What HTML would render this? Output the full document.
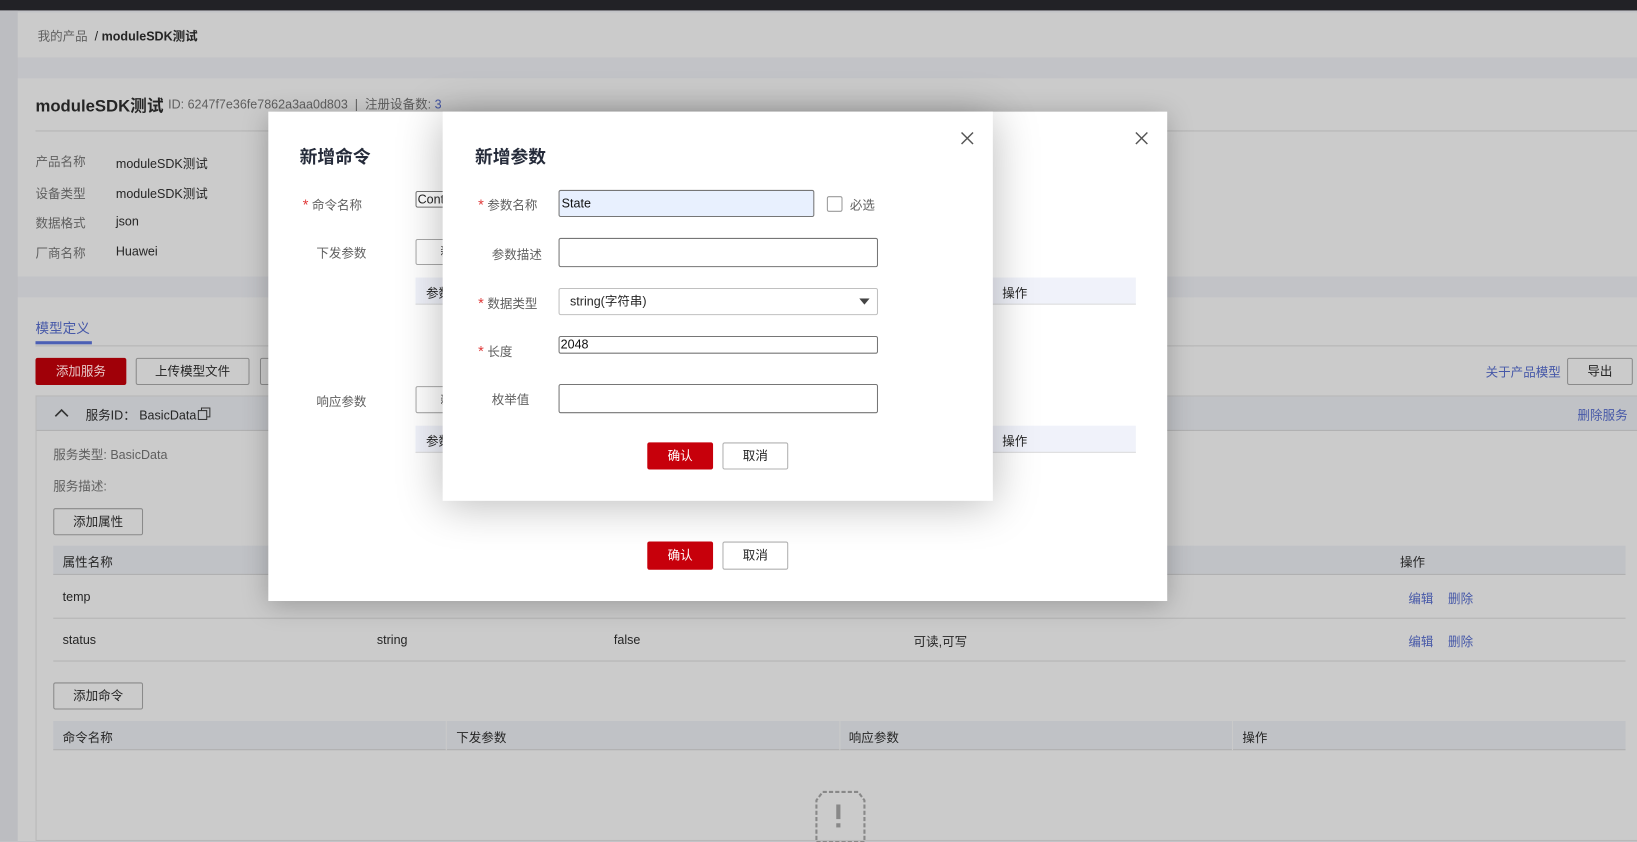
<!DOCTYPE html>
<html><head><meta charset="utf-8"><style>
*{margin:0;padding:0;box-sizing:border-box}
html,body{width:1637px;height:841px;overflow:hidden;background:#c2c3c7}
body{font-family:"Liberation Sans","Noto Sans CJK SC",sans-serif;font-size:12px;color:#252525}
#w{position:absolute;left:0;top:0;width:1568px;height:806px;transform:scale(1.04401,1.04342);transform-origin:0 0}
.a{position:absolute;white-space:nowrap}
.card{position:absolute;background:#cbcbcb}
.btn{position:absolute;border:1px solid #8a8a8a;border-radius:2px;text-align:center;font-size:12px;color:#252525;background:transparent}
.lnk{color:#4658a8}
.g{color:#5f5f5f}
.dlg{position:absolute;background:#fff;box-shadow:0 4px 24px rgba(0,0,0,.25)}
.star{color:#e03a3a;font-size:14px}
.inp{position:absolute;border:1px solid #767676;border-radius:2px;background:#fff}
.ok{position:absolute;background:#c7000b;color:#fff;text-align:center;font-size:12px;border-radius:2px;line-height:27px}
.cc{position:absolute;border:1px solid #b0b0b0;background:#fff;text-align:center;line-height:25px;border-radius:2px}
</style></head><body><div id="w">
<div class="a" style="left:0;top:0;width:1568px;height:10px;background:#222226"></div>
<div class="a" style="left:0;top:10px;width:17px;height:796px;background:#bcbdc1"></div>
<div class="card" style="left:17px;top:12px;width:1551px;height:43px"></div>
<div class="a g" style="left:36px;top:26px">我的产品 <span style="color:#252525">&nbsp;/ <b>moduleSDK测试</b></span></div>
<div class="card" style="left:17px;top:75px;width:1551px;height:190px"></div>
<div class="a" style="left:34px;top:88px;font-size:16px;font-weight:bold">moduleSDK测试</div>
<div class="a g" style="left:161px;top:91px">ID: 6247f7e36fe7862a3aa0d803 &nbsp;| &nbsp;注册设备数: <span class="lnk">3</span></div>
<div class="a" style="left:34px;top:125px;width:1534px;height:1px;background:#b4b4b4"></div>
<div class="a g" style="left:34px;top:148px;line-height:14px">产品名称</div><div class="a" style="left:111px;top:148px">moduleSDK测试</div>
<div class="a g" style="left:34px;top:177px">设备类型</div><div class="a" style="left:111px;top:177px">moduleSDK测试</div>
<div class="a g" style="left:34px;top:205px">数据格式</div><div class="a" style="left:111px;top:205px">json</div>
<div class="a g" style="left:34px;top:234px">厂商名称</div><div class="a" style="left:111px;top:234px">Huawei</div>
<div class="card" style="left:17px;top:285px;width:1551px;height:521px"></div>
<div class="a lnk" style="left:34px;top:304px;font-size:13px">模型定义</div>
<div class="a" style="left:34px;top:327px;width:54px;height:3px;background:#4b5fb5"></div>
<div class="a" style="left:34px;top:331px;width:1534px;height:1px;background:#b4b4b4"></div>
<div class="a" style="left:34px;top:343px;width:87px;height:26px;background:#a00008;border-radius:2px;color:#e8c8c8;text-align:center;line-height:26px">添加服务</div>
<div class="btn" style="left:130px;top:343px;width:109px;height:26px;line-height:24px">上传模型文件</div>
<div class="btn" style="left:249px;top:343px;width:30px;height:26px"></div>
<div class="a lnk" style="left:1423px;top:348px">关于产品模型</div>
<div class="btn" style="left:1501px;top:343px;width:63px;height:26px;line-height:24px">导出</div>
<div class="a" style="left:34px;top:379px;width:1534px;height:427px;border:1px solid #b8b8b8;border-right:none"></div>
<div class="a" style="left:35px;top:380px;width:1533px;height:33px;background:#c0c2c6;border-bottom:1px solid #b0b0b0"></div>
<svg class="a" style="left:52px;top:391px" width="14" height="10"><path d="M1 8 L7 2 L13 8" stroke="#333" stroke-width="1.6" fill="none"/></svg>
<div class="a" style="left:82px;top:389px">服务ID： BasicData</div>
<svg class="a" style="left:189px;top:390px" width="13" height="13"><rect x="1" y="3.5" width="8" height="8.5" fill="none" stroke="#333"/><path d="M4 3.5V1h8v8.5H9" fill="none" stroke="#333"/></svg>
<div class="a lnk" style="left:1511px;top:389px">删除服务</div>
<div class="a g" style="left:51px;top:427px">服务类型: BasicData</div>
<div class="a g" style="left:51px;top:457px">服务描述:</div>
<div class="btn" style="left:51px;top:487px;width:86px;height:26px;line-height:24px">添加属性</div>
<div class="a" style="left:51px;top:523px;width:1506px;height:28px;background:#c0c2c6;border-bottom:1px solid #afafaf"></div>
<div class="a" style="left:60px;top:530px">属性名称</div><div class="a" style="left:1341px;top:530px">操作</div>
<div class="a" style="left:60px;top:565px">temp</div>
<div class="a lnk" style="left:1349px;top:565px">编辑</div><div class="a lnk" style="left:1387px;top:565px">删除</div>
<div class="a" style="left:51px;top:592px;width:1506px;height:1px;background:#b4b4b4"></div>
<div class="a" style="left:60px;top:606px">status</div><div class="a" style="left:361px;top:606px">string</div><div class="a" style="left:588px;top:606px">false</div><div class="a" style="left:875px;top:606px">可读,可写</div>
<div class="a lnk" style="left:1349px;top:606px">编辑</div><div class="a lnk" style="left:1387px;top:606px">删除</div>
<div class="a" style="left:51px;top:633px;width:1506px;height:1px;background:#b4b4b4"></div>
<div class="btn" style="left:51px;top:654px;width:86px;height:26px;line-height:24px">添加命令</div>
<div class="a" style="left:51px;top:691px;width:1506px;height:28px;background:#c0c2c6;border-bottom:1px solid #afafaf"></div>
<div class="a" style="left:427px;top:691px;width:1px;height:28px;background:#cacaca"></div>
<div class="a" style="left:804px;top:691px;width:1px;height:28px;background:#cacaca"></div>
<div class="a" style="left:1180px;top:691px;width:1px;height:28px;background:#cacaca"></div>
<div class="a" style="left:60px;top:698px">命令名称</div><div class="a" style="left:437px;top:698px">下发参数</div><div class="a" style="left:813px;top:698px">响应参数</div><div class="a" style="left:1190px;top:698px">操作</div>
<svg class="a" style="left:778px;top:757px" width="54" height="50"><path d="M10 2h34l6 8v40H4V10z" fill="none" stroke="#888" stroke-width="2" stroke-dasharray="4 2"/><rect x="23" y="14" width="4" height="14" fill="#888"/><rect x="23" y="32" width="4" height="4" fill="#888"/></svg>

<div class="dlg" style="left:257px;top:107px;width:861px;height:469px"></div>
<div class="a" style="left:287px;top:136px;font-size:17px;font-weight:bold;color:#252b3a">新增命令</div>
<svg class="a" style="left:1087px;top:126px" width="13" height="13"><path d="M1 1L12 12M12 1L1 12" stroke="#555" stroke-width="1.4"/></svg>
<div class="a g" style="left:290px;top:188px"><span class="star">*</span> 命令名称</div>
<div class="inp" style="left:398px;top:183px;width:60px;height:16px;font-size:12px;line-height:14px;padding-left:1px">Cont</div>
<div class="a g" style="left:303px;top:234px">下发参数</div>
<div class="btn" style="left:398px;top:229px;width:60px;height:25px;border-color:#aaa;line-height:23px">新</div>
<div class="a" style="left:398px;top:266px;width:690px;height:26px;background:#f0f2fa;border-bottom:1px solid #dcdcdc"></div>
<div class="a" style="left:408px;top:272px">参数</div><div class="a" style="left:960px;top:272px">操作</div>
<div class="a g" style="left:303px;top:376px">响应参数</div>
<div class="btn" style="left:398px;top:370px;width:60px;height:26px;border-color:#aaa;line-height:24px">新</div>
<div class="a" style="left:398px;top:408px;width:690px;height:26px;background:#f0f2fa;border-bottom:1px solid #dcdcdc"></div>
<div class="a" style="left:408px;top:414px">参数</div><div class="a" style="left:960px;top:414px">操作</div>
<div class="ok" style="left:620px;top:519px;width:63px;height:27px">确认</div>
<div class="cc" style="left:692px;top:519px;width:63px;height:27px">取消</div>

<div class="dlg" style="left:424px;top:107px;width:527px;height:373px;box-shadow:0 4px 40px rgba(0,0,0,.28)"></div>
<div class="a" style="left:455px;top:136px;font-size:17px;font-weight:bold;color:#252b3a">新增参数</div>
<svg class="a" style="left:920px;top:126px" width="13" height="13"><path d="M1 1L12 12M12 1L1 12" stroke="#555" stroke-width="1.4"/></svg>
<div class="a g" style="left:458px;top:188px"><span class="star">*</span> 参数名称</div>
<div class="inp" style="left:535px;top:182px;width:245px;height:26px;background:#e8f0fe;line-height:24px;padding-left:2px;color:#111">State</div>
<div class="a" style="left:792px;top:188px;width:15px;height:15px;border:1px solid #999;border-radius:2px"></div>
<div class="a g" style="left:814px;top:188px">必选</div>
<div class="a g" style="left:471px;top:235px">参数描述</div>
<div class="inp" style="left:535px;top:228px;width:306px;height:28px"></div>
<div class="a g" style="left:458px;top:282px"><span class="star">*</span> 数据类型</div>
<div class="inp" style="left:535px;top:276px;width:306px;height:26px;border-color:#c0c0c0;line-height:24px;padding-left:10px;color:#252525">string(字符串)</div>
<svg class="a" style="left:823px;top:286px" width="10" height="6"><path d="M0 0h10L5 6z" fill="#444"/></svg>
<div class="a g" style="left:458px;top:328px"><span class="star">*</span> 长度</div>
<div class="inp" style="left:535px;top:322px;width:306px;height:17px;line-height:15px;padding-left:1px;color:#111">2048</div>
<div class="a g" style="left:471px;top:374px">枚举值</div>
<div class="inp" style="left:535px;top:368px;width:306px;height:28px"></div>
<div class="ok" style="left:620px;top:424px;width:63px;height:26px;line-height:26px">确认</div>
<div class="cc" style="left:692px;top:424px;width:63px;height:26px;line-height:24px">取消</div>
</div></body></html>
